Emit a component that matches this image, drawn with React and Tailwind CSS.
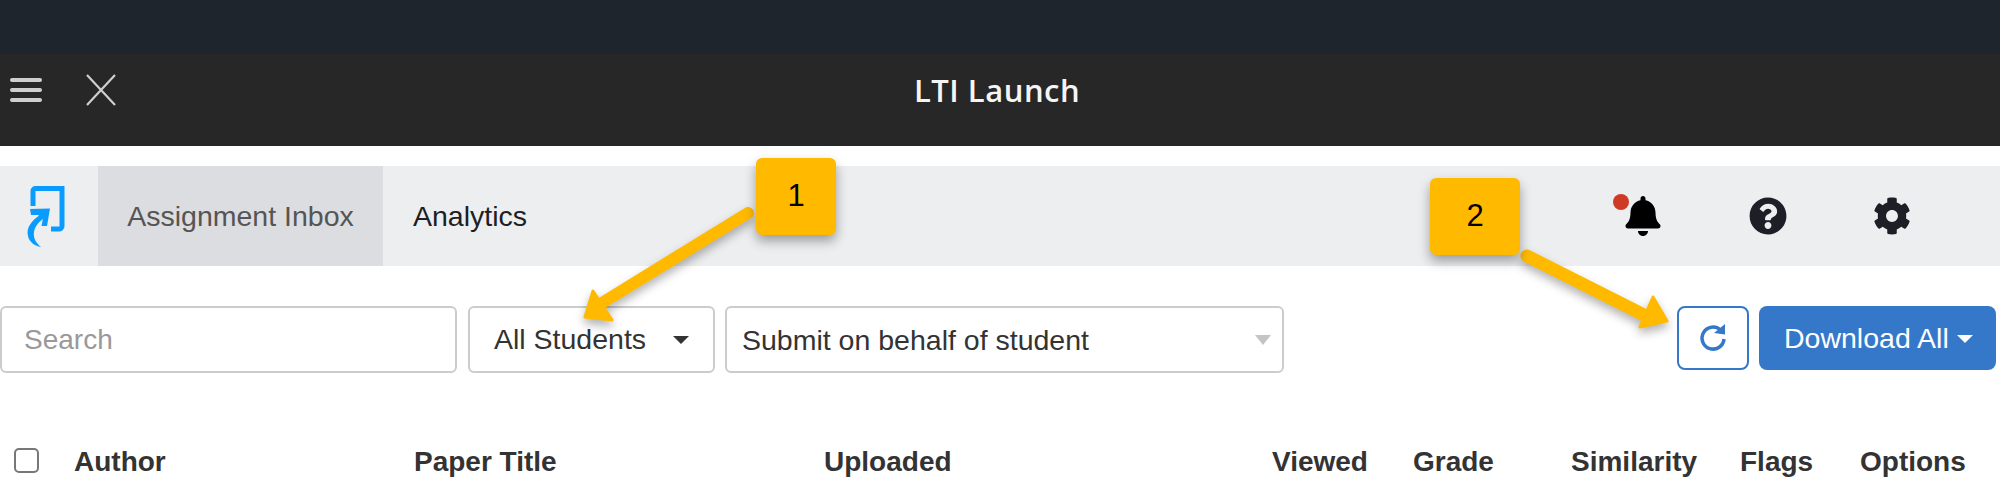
import { FaBell, FaCog, FaQuestionCircle } from "react-icons/fa";

const helvetica = "font-['Liberation_Sans',Arial,sans-serif]";

const columns = [
  { label: "Author", width: "w-[340px]" },
  { label: "Paper Title", width: "w-[410px]" },
  { label: "Uploaded", width: "w-[448px]" },
  { label: "Viewed", width: "w-[141px]" },
  { label: "Grade", width: "w-[158px]" },
  { label: "Similarity", width: "w-[169px]" },
  { label: "Flags", width: "w-[120px]" },
  { label: "Options", width: "w-auto" },
];

function Logo() {
  return (
    <svg width="70" height="80" viewBox="0 0 70 80" fill="none">
      <path d="M19 30V15a2.500 2.500 0 0 1 2.500-2.500H48V50a3 3 0 0 1-3 3H37" stroke="#0a9bff" strokeWidth="5" />
      <path d="M16 33L36 32.500 33 50 27.500 50 29 42 24 39 17 39z" fill="#0a9bff" />
      <path d="M27 38C17 45 12 52 14 60C15 66 21 70 27 71C22 67 19 62 20 56C21 50 25 46 30 42z" fill="#0a9bff" />
    </svg>
  );
}

function RefreshIcon() {
  return (
    <svg width="32" height="32" viewBox="0 0 32 32" fill="none">
      <path d="M23.500 8A11 11 0 1 0 27 17" stroke="#3578c9" strokeWidth="3.500" />
      <path d="M28 2v10.500L17 11z" fill="#3578c9" />
    </svg>
  );
}

function Caret({ className = "border-x-[8px] border-t-[8px] border-t-[#333333]" }) {
  return <span className={`h-0 w-0 border-x-transparent ${className}`} />;
}

function Callout({ number, className }) {
  return (
    <div className={`absolute flex h-[77px] items-center justify-center rounded-md bg-[#ffba00] text-[31px] text-black shadow-[0_6px_12px_rgba(0,0,0,0.35)] ${helvetica} ${className}`}>
      {number}
    </div>
  );
}

export default function App() {
  return (
    <div className={`relative h-[498px] w-[2000px] overflow-hidden bg-white ${helvetica}`}>
      <div className="h-[54px] bg-[#1f252d]" />

      <div className="flex h-[92px] items-center bg-[#272727] pb-[20px]">
        <div className="ml-[10px] flex w-[32px] flex-col gap-[6px]">
          <span className="h-[4px] rounded-full bg-[#cfcfcf]" />
          <span className="h-[4px] rounded-full bg-[#cfcfcf]" />
          <span className="h-[4px] rounded-full bg-[#cfcfcf]" />
        </div>
        <svg className="ml-[43px]" width="32" height="32" viewBox="0 0 32 32" stroke="#cfcfcf" strokeWidth="2.2">
          <path d="M2 1l28 30M30 1L2 31" />
        </svg>
        <div className="ml-[797px] font-['Open_Sans',sans-serif] text-[31px] font-semibold tracking-[0.5px] text-[#f5f5f5]">
          LTI Launch
        </div>
      </div>

      <div className="mt-[20px] flex h-[100px] items-stretch bg-[#edeef0]">
        <div className="flex w-[98px] items-center justify-center">
          <Logo />
        </div>
        <div className="flex w-[285px] items-center justify-center bg-[#dcdde0] text-[28.500px] text-[#555555]">
          Assignment Inbox
        </div>
        <div className="ml-[30px] flex items-center text-[28.500px] text-[#1d1e26]">Analytics</div>
        <div className="ml-auto mr-[89px] flex items-center">
          <div className="relative mr-[88px]">
            <FaBell className="h-[40px] w-[36px] text-black" />
            <span className="absolute -left-[12px] -top-[2px] h-[16px] w-[16px] rounded-full bg-[#cf3a24]" />
          </div>
          <FaQuestionCircle className="mr-[86px] text-[38px] text-[#1d1e26]" />
          <FaCog className="text-[38px] text-[#1d1e26]" />
        </div>
      </div>

      <div className="mt-[40px] flex h-[67px] items-start pr-[4px]">
        <div className="flex h-[67px] w-[457px] items-center rounded-md border-2 border-[#cccccc] pl-[22px] text-[28px] text-[#999999]">
          Search
        </div>
        <div className="ml-[11px] flex h-[67px] w-[247px] items-center justify-between rounded-md border-2 border-[#cccccc] pl-[24px] pr-[24px] text-[28.500px] text-[#333333]">
          All Students
          <Caret />
        </div>
        <div className="ml-[10px] flex h-[67px] w-[559px] items-center justify-between rounded-md border-2 border-[#cccccc] pl-[15px] pr-[11px] text-[28.500px] text-[#333333]">
          <span className="mt-[2px]">Submit on behalf of student</span>
          <Caret className="border-x-[8px] border-t-[10px] border-t-[#c4c4c4]" />
        </div>
        <div className="ml-auto flex h-[64px] w-[72px] items-center justify-center rounded-lg border-2 border-[#3578c9]">
          <RefreshIcon />
        </div>
        <div className="ml-[10px] flex h-[64px] w-[237px] items-center gap-[8px] rounded-lg bg-[#3578c9] pl-[25px] text-[28.500px] text-white">
          Download All
          <Caret className="mt-[2px] border-x-[8px] border-t-[8px] border-t-white" />
        </div>
      </div>

      <div className="mt-[76px] flex h-[26px] items-center text-[28px] font-bold text-[#333333]">
        <span className="-mt-[4px] ml-[14px] mr-[35px] h-[25px] w-[25px] rounded-[5px] border-2 border-[#777777]" />
        {columns.map((col) => (
          <div key={col.label} className={`shrink-0 whitespace-nowrap ${col.width}`}>
            {col.label}
          </div>
        ))}
      </div>

      {/* annotation arrows over the page */}
      <svg className="pointer-events-none absolute left-0 top-0 drop-shadow-[0_5px_5px_rgba(0,0,0,0.3)]" width="2000" height="498" fill="#ffba00" stroke="#ffba00">
        <path d="M748 213L597 306" strokeWidth="12" strokeLinecap="round" />
        <path d="M593 291L585 317 612 320z" strokeWidth="3" strokeLinejoin="round" />
        <path d="M1527 256L1650 318" strokeWidth="13" strokeLinecap="round" />
        <path d="M1653 297L1667 321 1640 327z" strokeWidth="3" strokeLinejoin="round" />
      </svg>

      <Callout number="1" className="left-[756px] top-[158px] w-[80px]" />
      <Callout number="2" className="left-[1430px] top-[178px] w-[90px]" />
    </div>
  );
}
